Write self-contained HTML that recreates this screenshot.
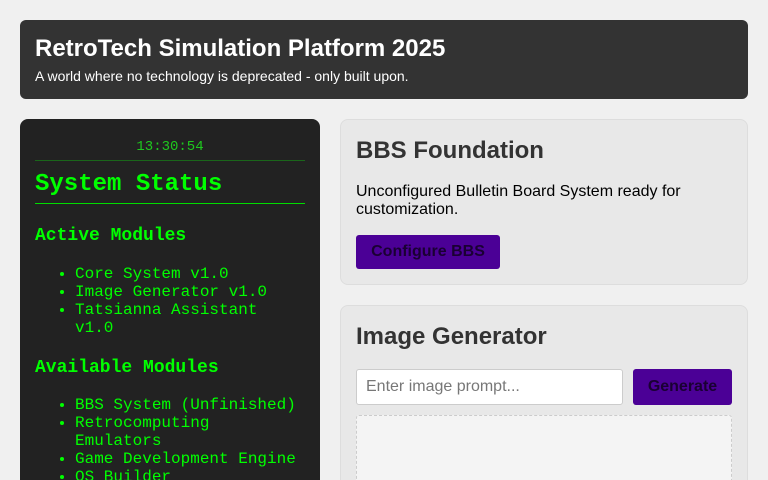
<!DOCTYPE html><html style="overflow:hidden;height:480px"><head><style>
*{margin:0;padding:0;box-sizing:border-box}
body{width:768px;height:480px;overflow:hidden;background:#f0f0f0;font-family:"Liberation Sans",sans-serif;position:relative}
.a{position:absolute}
.hdr{left:20px;top:20px;width:728px;height:79px;background:#333;border-radius:6px;color:#fff}
.side{left:20px;top:119px;width:300px;height:361px;background:#222;border-radius:8px 8px 0 0;font-family:"Liberation Mono",monospace;color:#0f0;overflow:hidden}
.card{left:340px;width:408px;background:#e8e8e8;border:1px solid #ddd;border-radius:8px;color:#333}
.btn{background:#4b0096;border-radius:3px;color:#1a0033;font-weight:bold;font-size:16px;text-align:center}
ul{list-style:disc;padding-left:40px;font-size:16px;line-height:18px}
</style></head><body>
<div class="a hdr"><div class="a" style="left:15px;top:15px;font-size:24px;font-weight:bold">RetroTech Simulation Platform 2025</div>
<div class="a" style="left:15px;top:48px;font-size:14px">A world where no technology is deprecated - only built upon.</div></div>
<div class="a side">
<div class="a" style="left:0;width:300px;top:20px;text-align:center;font-size:14px;color:#1ec81e">13:30:54</div>
<div class="a" style="left:15px;width:270px;top:41px;border-top:1px solid #1a661a"></div>
<div class="a" style="left:15px;top:52px;font-size:24px;font-weight:bold">System Status</div>
<div class="a" style="left:15px;width:270px;top:84px;border-top:1px solid #00dd00"></div>
<div class="a" style="left:15px;top:107px;font-size:18px;font-weight:bold">Active Modules</div>
<ul class="a" style="left:15px;top:146px;width:270px"><li>Core System v1.0</li><li>Image Generator v1.0</li><li>Tatsianna Assistant v1.0</li></ul>
<div class="a" style="left:15px;top:239px;font-size:18px;font-weight:bold">Available Modules</div>
<ul class="a" style="left:15px;top:277px;width:270px"><li>BBS System (Unfinished)</li><li>Retrocomputing Emulators</li><li>Game Development Engine</li><li>OS Builder</li></ul>
</div>
<div class="a card" style="top:119px;height:166px">
<div class="a" style="left:15px;top:17px;font-size:24px;font-weight:bold">BBS Foundation</div>
<div class="a" style="left:15px;top:63px;width:360px;font-size:16px;line-height:18px;color:#000">Unconfigured Bulletin Board System ready for customization.</div>
<div class="a btn" style="left:15px;top:115px;width:144px;height:34px;line-height:34px">Configure BBS</div>
</div>
<div class="a card" style="top:305px;height:175px;border-bottom:none;border-radius:8px 8px 0 0">
<div class="a" style="left:15px;top:17px;font-size:24px;font-weight:bold">Image Generator</div>
<div class="a" style="left:15px;top:63px;width:267px;height:36px;background:#fff;border:1px solid #ccc;border-radius:3px;font-size:16px;color:#777;padding-left:9px;line-height:34px">Enter image prompt...</div>
<div class="a btn" style="left:292px;top:63px;width:99px;height:36px;line-height:36px">Generate</div>
<div class="a" style="left:15px;top:109px;width:376px;height:100px;background:#f4f4f4;border:1px dashed #ccc;border-radius:3px"></div>
</div>
</body></html>
